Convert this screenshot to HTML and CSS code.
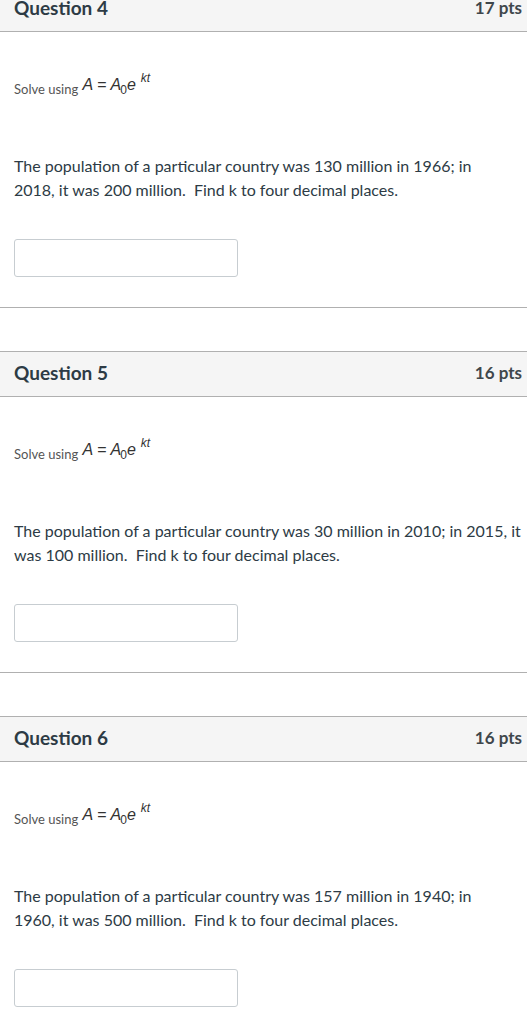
FILE: index.html
```html
<!DOCTYPE html>
<html>
<head>
<meta charset="utf-8">
<link rel="stylesheet" href="styles.css">
</head>
<body>
<div class="quiz">
  <section class="question first">
    <header class="q-header">
      <span class="q-name">Question 4</span>
      <span class="q-pts">17 pts</span>
    </header>
    <div class="q-body">
      <div class="solve">Solve using <span class="math"><i>A</i><span class="eq">=</span><i>A</i><sub>0</sub><i>e</i><sup><i>kt</i></sup></span></div>
      <p class="prompt">The population of a particular country was 130 million in 1966; in 2018,&nbsp;it was 200 million.&nbsp; Find k to four decimal places.</p>
      <input class="answer" type="text">
    </div>
  </section>
  <section class="question">
    <header class="q-header">
      <span class="q-name">Question 5</span>
      <span class="q-pts">16 pts</span>
    </header>
    <div class="q-body">
      <div class="solve">Solve using <span class="math"><i>A</i><span class="eq">=</span><i>A</i><sub>0</sub><i>e</i><sup><i>kt</i></sup></span></div>
      <p class="prompt">The population of a particular country was 30 million in 2010; in 2015, it was 100 million.&nbsp; Find k to four decimal places.</p>
      <input class="answer" type="text">
    </div>
  </section>
  <section class="question">
    <header class="q-header">
      <span class="q-name">Question 6</span>
      <span class="q-pts">16 pts</span>
    </header>
    <div class="q-body">
      <div class="solve">Solve using <span class="math"><i>A</i><span class="eq">=</span><i>A</i><sub>0</sub><i>e</i><sup><i>kt</i></sup></span></div>
      <p class="prompt">The population of a particular country was 157 million in 1940; in 1960,&nbsp;it was 500 million.&nbsp; Find k to four decimal places.</p>
      <input class="answer" type="text">
    </div>
  </section>
</div>
</body>
</html>
```
FILE: styles.css
```css
html, body {
  margin: 0;
  padding: 0;
  background: #fff;
}
body {
  font-family: Lato, "Open Sans", sans-serif;
  color: #2d3b45;
  width: 527px;
  overflow: hidden;
}
.quiz {
  display: flex;
  flex-direction: column;
  gap: 43px;
}
.question {
  border-bottom: 1px solid #b0b0b0;
}
.question.first {
  margin-top: -14px;
}
.q-header {
  display: flex;
  justify-content: space-between;
  align-items: center;
  height: 44px;
  box-sizing: content-box;
  padding: 0 5px 0 14px;
  background: #f5f5f5;
  border-top: 1px solid #b0b0b0;
  border-bottom: 1px solid #b0b0b0;
}
.q-name,
.q-pts {
  line-height: 1;
  margin-top: -4px;
}
.q-name {
  font-size: 19px;
  font-weight: 700;
  color: #2d3b45;
}
.q-pts {
  font-size: 17px;
  font-weight: 700;
  color: #3f474c;
}
.q-body {
  padding: 0 0 0 14px;
  display: flex;
  flex-direction: column;
  align-items: flex-start;
}
.solve {
  margin-top: 45px;
  height: 24px;
  line-height: 24px;
  font-size: 13px;
  color: #555;
  white-space: nowrap;
}
.math {
  font-family: "Liberation Sans", Arial, sans-serif;
  font-size: 16px;
  color: #333;
  position: relative;
  top: -4px;
  margin-left: 1px;
}
.math i {
  font-style: italic;
}
.math .eq {
  margin: 0 4px;
}
.math sub {
  font-size: 12px;
  vertical-align: -4px;
  line-height: 0;
  margin-left: -1px;
}
.math sup {
  font-size: 12px;
  vertical-align: 8px;
  line-height: 0;
  margin-left: 5px;
}
.prompt {
  margin: 53px 0 0;
  font-size: 16px;
  line-height: 24px;
  color: #2d3b45;
}
.answer {
  margin: 37px 0 30px;
  width: 224px;
  height: 38px;
  box-sizing: border-box;
  border: 1px solid #c7cdd1;
  border-radius: 3px;
  background: #fff;
  padding: 0;
}
```
